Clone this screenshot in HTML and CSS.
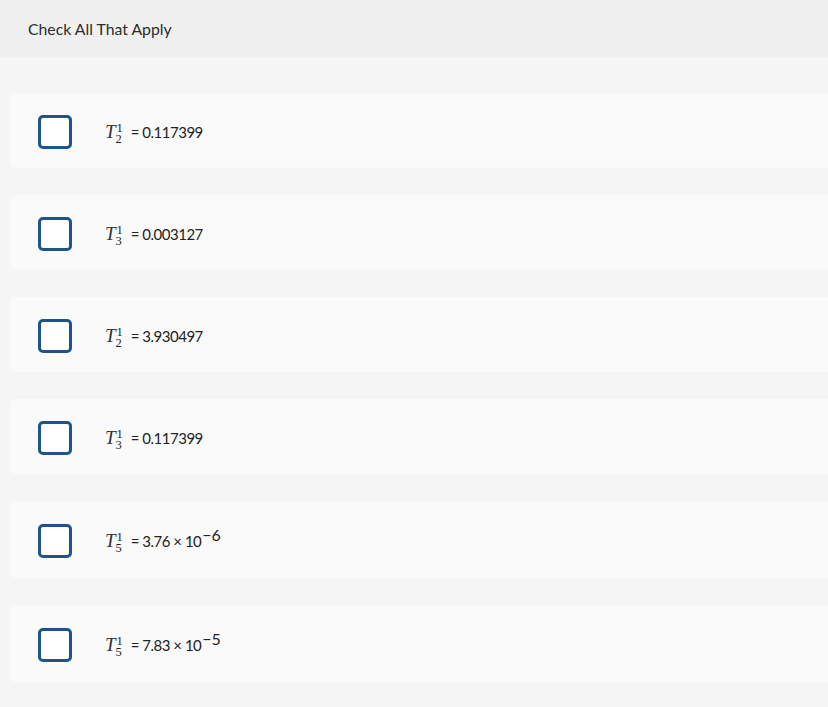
FILE: index.html
```html
<!DOCTYPE html>
<html>
<head>
<meta charset="utf-8">
<link rel="stylesheet" href="styles.css">
</head>
<body>
<div class="header">Check All That Apply</div>
<div class="list">
  <div class="card">
    <span class="box"></span>
    <span class="expr"><span class="mvar">T</span><span class="scripts"><span class="sup">1</span><span class="sub">2</span></span><span class="val">= 0.117399</span></span>
  </div>
  <div class="card">
    <span class="box"></span>
    <span class="expr"><span class="mvar">T</span><span class="scripts"><span class="sup">1</span><span class="sub">3</span></span><span class="val">= 0.003127</span></span>
  </div>
  <div class="card">
    <span class="box"></span>
    <span class="expr"><span class="mvar">T</span><span class="scripts"><span class="sup">1</span><span class="sub">2</span></span><span class="val">= 3.930497</span></span>
  </div>
  <div class="card">
    <span class="box"></span>
    <span class="expr"><span class="mvar">T</span><span class="scripts"><span class="sup">1</span><span class="sub">3</span></span><span class="val">= 0.117399</span></span>
  </div>
  <div class="card tall">
    <span class="box"></span>
    <span class="expr"><span class="mvar">T</span><span class="scripts"><span class="sup">1</span><span class="sub">5</span></span><span class="val">= 3.76 × 10<sup class="exp">−6</sup></span></span>
  </div>
  <div class="card tall">
    <span class="box"></span>
    <span class="expr"><span class="mvar">T</span><span class="scripts"><span class="sup">1</span><span class="sub">5</span></span><span class="val">= 7.83 × 10<sup class="exp">−5</sup></span></span>
  </div>
</div>
</body>
</html>
```

FILE: styles.css
```css
html, body {
  margin: 0;
  padding: 0;
  background: #f5f5f5;
  font-family: Lato, "Open Sans", sans-serif;
  color: #333;
}
.header {
  height: 57px;
  background: #f0f0f0;
  padding-left: 28px;
  display: flex;
  align-items: center;
  font-size: 15.8px;
  color: #2d2d2d;
  box-sizing: border-box;
  padding-bottom: 1px;
}
.list {
  padding: 36px 0 0 10px;
  display: flex;
  flex-direction: column;
  gap: 27px;
}
.card {
  height: 75px;
  background: #fafafa;
  border-radius: 6px 0 0 6px;
  display: flex;
  align-items: center;
  padding-left: 28px;
  padding-top: 3px;
  box-sizing: border-box;
}
.card.tall {
  height: 77px;
}
.box {
  width: 34px;
  height: 34px;
  box-sizing: border-box;
  border: 3px solid #1e5588;
  border-radius: 5px;
  background: #fff;
  flex: none;
}
.expr {
  margin-left: 33px;
  display: flex;
  align-items: center;
  font-size: 15px;
  color: #222;
}
.mvar {
  font-family: "Liberation Serif", "DejaVu Serif", serif;
  font-style: italic;
  font-size: 19px;
  color: #333;
}
.scripts {
  display: inline-flex;
  flex-direction: column;
  font-family: "Liberation Serif", "DejaVu Serif", serif;
  font-size: 12.5px;
  line-height: 10px;
  margin-left: 1px;
  margin-right: 8px;
  position: relative;
  top: 1px;
}
.sup {
  display: block;
}
.sub {
  display: block;
  margin-left: -1px;
  margin-top: 1px;
}
.val {
  letter-spacing: -0.5px;
}
.exp {
  font-size: 16px;
  vertical-align: 0;
  position: relative;
  top: -6px;
  line-height: 0;
  letter-spacing: 0;
  margin-left: 1px;
}
```
